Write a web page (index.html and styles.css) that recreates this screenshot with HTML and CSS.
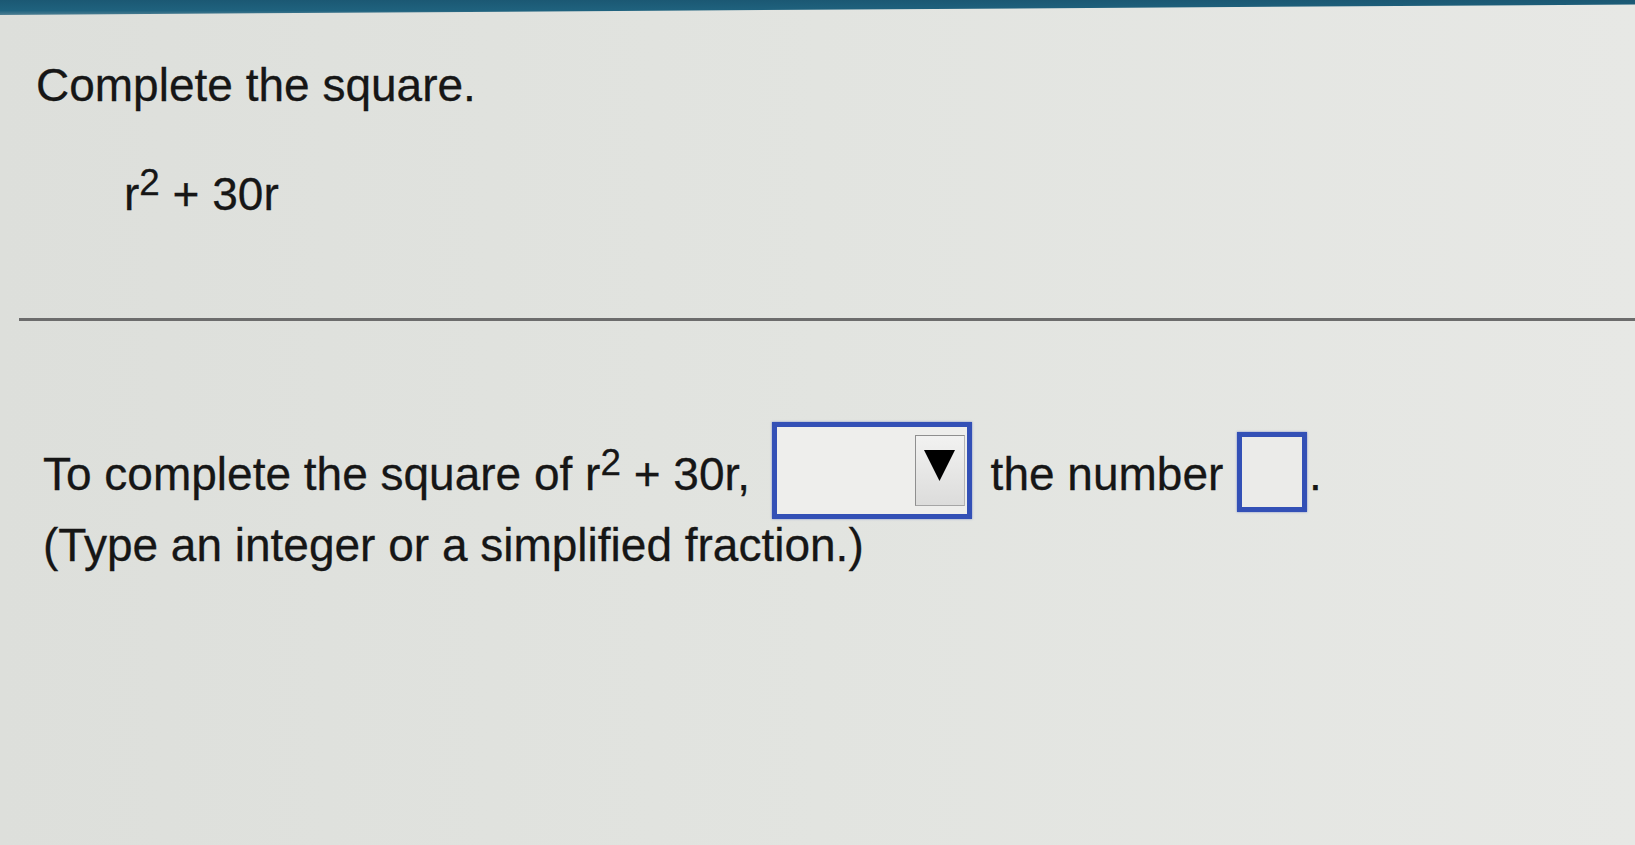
FILE: index.html
```html
<!DOCTYPE html>
<html lang="en">
<head>
<meta charset="utf-8">
<title>Complete the square</title>
<link rel="stylesheet" href="styles.css">
</head>
<body>
<div class="topbar"></div>
<main class="page">
  <section class="question">
    <h1 class="title">Complete the square.</h1>
    <p class="expr">r<sup class="sup">2</sup> + 30r</p>
  </section>
  <hr class="divider">
  <section class="answer">
    <p class="line">To complete the square of r<sup class="sup">2</sup> + 30r, <span class="dropdown"><span class="dd-inner"><span class="dd-btn"><svg class="dd-arrow" viewBox="0 0 31 31" width="31" height="31"><polygon points="0,0 31,0 15.5,31" fill="#000"/></svg></span></span></span> the number <span class="numbox"></span>.</p>
    <p class="hint">(Type an integer or a simplified fraction.)</p>
  </section>
</main>
</body>
</html>
```
FILE: styles.css
```css
html, body {
  margin: 0;
  padding: 0;
}
body {
  background: linear-gradient(90deg, #dddfdb 0%, #e2e4e0 50%, #e7e8e5 100%);
  font-family: "Liberation Sans", Arial, Helvetica, sans-serif;
  color: #161616;
  min-height: 845px;
  overflow: hidden;
}
.topbar {
  height: 15px;
  background: linear-gradient(180deg, #1b5873 0%, #1f627e 70%, #4d7e92 100%);
  clip-path: polygon(0 0, 100% 0, 100% 30%, 0 100%);
}
.page {
  display: flex;
  flex-direction: column;
}
.question {
  padding-left: 36px;
}
.title {
  margin: 44px 0 0 0;
  font-size: 46px;
  font-weight: normal;
  line-height: 53px;
  -webkit-text-stroke: 0.3px #161616;
}
.expr {
  margin: 56px 0 0 88px;
  font-size: 46px;
  line-height: 53px;
  -webkit-text-stroke: 0.3px #161616;
}
.sup {
  font-size: 0.8em;
  line-height: 0;
  vertical-align: 0.4em;
}
.divider {
  margin: 97px 0 0 19px;
  border: 0;
  height: 3px;
  background: #6c6c6c;
}
.answer {
  padding-left: 43px;
  margin-top: 101px;
}
.line {
  margin: 0;
  font-size: 46px;
  line-height: 53px;
  -webkit-text-stroke: 0.3px #161616;
}
.dropdown {
  display: inline-block;
  overflow: hidden;
  box-sizing: border-box;
  width: 200px;
  height: 97px;
  margin-left: 9px;
  margin-right: 6px;
  border: 5px solid #3350b6;
  background: #eeeeec;
  vertical-align: -29px;
  box-shadow: 0 0 2px rgba(51, 80, 182, 0.6);
}
.dd-inner {
  display: flex;
  justify-content: flex-end;
  align-items: center;
  height: 100%;
  padding-right: 2px;
}
.dd-btn {
  display: flex;
  justify-content: center;
  align-items: flex-start;
  box-sizing: border-box;
  width: 50px;
  height: 71px;
  padding-top: 14px;
  border: 1px solid #8f8f8f;
  border-right-color: #b5b5b5;
  border-bottom-color: #a5a5a5;
  background: linear-gradient(180deg, #f2f2f1 0%, #dcdcdb 100%);
}
.dd-arrow {
  display: block;
}
.numbox {
  display: inline-block;
  overflow: hidden;
  box-sizing: border-box;
  width: 70px;
  height: 80px;
  margin-left: 1px;
  margin-right: 2px;
  border: 5px solid #3350b6;
  background: #ebebe9;
  vertical-align: -22px;
  box-shadow: 0 0 2px rgba(51, 80, 182, 0.6);
}
.hint {
  margin: 0;
  font-size: 46px;
  line-height: 53px;
  -webkit-text-stroke: 0.3px #161616;
}
```
